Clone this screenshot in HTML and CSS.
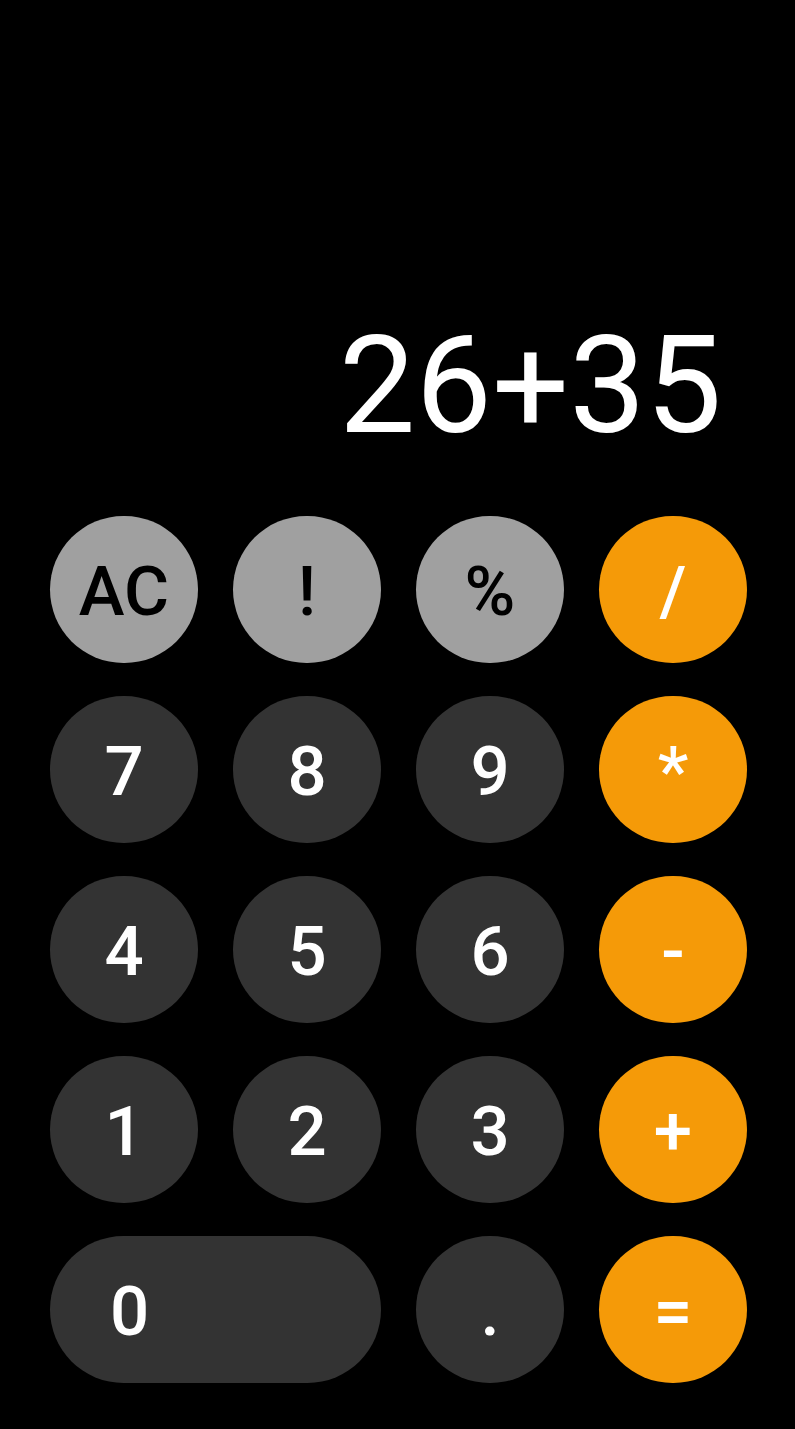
FILE: index.html
```html
<!DOCTYPE html>
<html lang="en">
<head>
  <meta charset="UTF-8">
  <meta name="viewport" content="width=device-width, initial-scale=1.0">
  <title>Calculator</title>
  <link rel="stylesheet" href="styles.css">
</head>
<body>
  <div class="calculator">
    <div class="display" id="display">26+35</div>
    <div class="keypad">
      <button class="key func">AC</button>
      <button class="key func">!</button>
      <button class="key func">%</button>
      <button class="key operator">/</button>
      <button class="key">7</button>
      <button class="key">8</button>
      <button class="key">9</button>
      <button class="key operator">*</button>
      <button class="key">4</button>
      <button class="key">5</button>
      <button class="key">6</button>
      <button class="key operator">-</button>
      <button class="key">1</button>
      <button class="key">2</button>
      <button class="key">3</button>
      <button class="key operator">+</button>
      <button class="key zero">0</button>
      <button class="key">.</button>
      <button class="key operator">=</button>
    </div>
  </div>
</body>
</html>
```
FILE: styles.css
```css
* {
  box-sizing: border-box;
}
body {
  margin: 0;
  background: #000;
  font-family: Roboto, sans-serif;
}
.calculator {
  display: flex;
  flex-direction: column;
  justify-content: flex-end;
  height: 100vh;
  padding: 0 49px 46px 50px;
}
.display {
  font-family: Roboto, sans-serif;
  font-size: 136px;
  line-height: 1;
  color: #fff;
  text-align: right;
  padding-right: 24px;
  margin-bottom: 62px;
}
.keypad {
  display: grid;
  grid-template-columns: repeat(4, 148px);
  grid-auto-rows: 147px;
  column-gap: 35px;
  row-gap: 33px;
}
.key {
  border: none;
  border-radius: 74px;
  background: #333333;
  color: #fff;
  font-family: Roboto, sans-serif;
  font-size: 69px;
  font-weight: 500;
  padding: 4px 0 0;
  line-height: 1;
  cursor: pointer;
}
.key.func {
  background: #a0a0a0;
  color: #000;
}
.key.operator {
  background: #f59a08;
  color: #fff;
}
.key.zero {
  grid-column: span 2;
  text-align: left;
  padding-left: 60px;
}
```
